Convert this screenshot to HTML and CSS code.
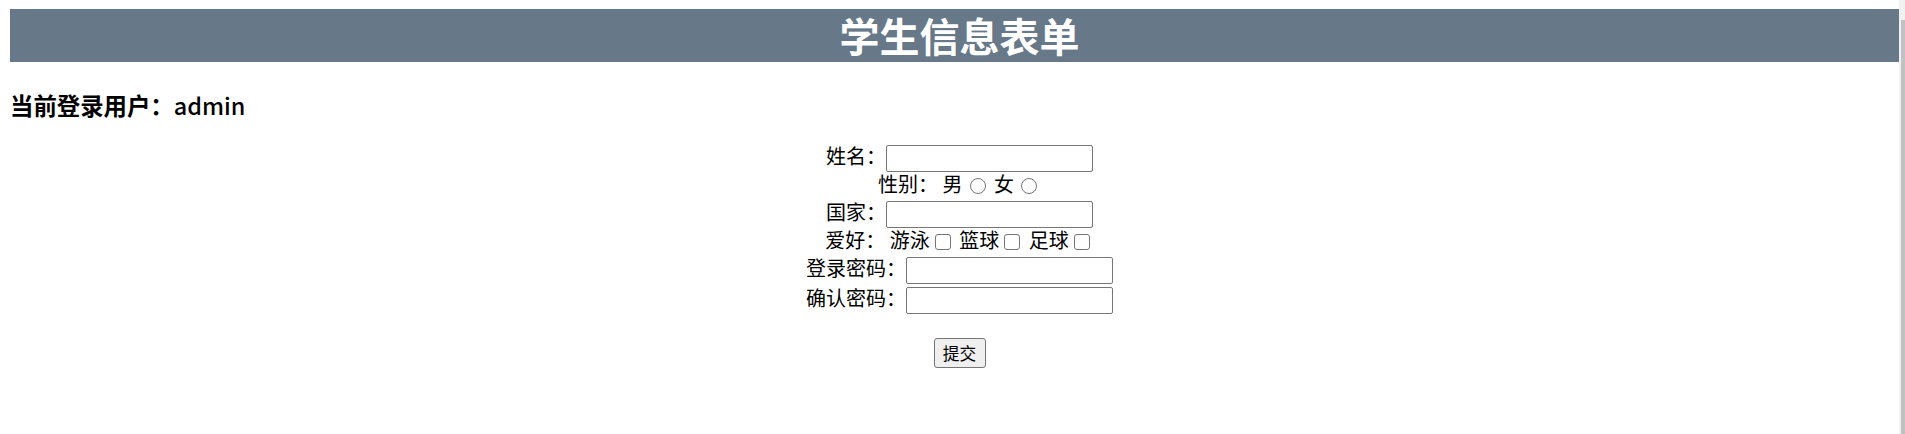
FILE: index.html
```html
<!DOCTYPE html>
<html lang="zh-CN">
<head>
<meta charset="utf-8">
<title>学生信息表单</title>
<link rel="stylesheet" href="styles.css">
</head>
<body>
<div class="page">
  <h1 class="title">学生信息表单</h1>
  <h3 class="user">当前登录用户：<span class="user-name">admin</span></h3>
  <form class="form">
    <div class="row row-input">
      <span class="label">姓名：</span>
      <input class="text" type="text">
    </div>
    <div class="row row-text">
      <span class="label">性别：</span>
      <span class="label sp">男</span>
      <input class="radio" type="radio" name="sex">
      <span class="label sp">女</span>
      <input class="radio" type="radio" name="sex">
    </div>
    <div class="row row-input">
      <span class="label">国家：</span>
      <input class="text" type="text">
    </div>
    <div class="row row-text">
      <span class="label">爱好：</span>
      <span class="label sp">游泳</span>
      <input class="check" type="checkbox">
      <span class="label sp">篮球</span>
      <input class="check" type="checkbox">
      <span class="label sp">足球</span>
      <input class="check" type="checkbox">
    </div>
    <div class="row row-input">
      <span class="label">登录密码：</span>
      <input class="text" type="password">
    </div>
    <div class="row row-input">
      <span class="label">确认密码：</span>
      <input class="text" type="password">
    </div>
    <div class="submit-row">
      <button class="submit" type="button">提交</button>
    </div>
  </form>
</div>
<div class="scrollbar"><div class="thumb"></div></div>
</body>
</html>
```

FILE: styles.css
```css
html {
  overflow: hidden;
}
body {
  margin: 0;
  background: #ffffff;
  color: #000000;
  font-family: "Noto Sans CJK SC", "Noto Sans", sans-serif;
}
.page {
  width: 1899px;
  padding: 9px 0 0 10px;
}
.title {
  margin: 0;
  height: 53px;
  line-height: 53px;
  background: #677888;
  color: #ffffff;
  font-size: 40px;
  font-weight: 700;
  text-align: center;
}
.user {
  margin: 28px 0 0 0;
  height: 30px;
  line-height: 30px;
  font-size: 23.4px;
  font-weight: 700;
}
.user-name {
  font-weight: 500;
}
.form {
  margin: 23px 0 0 0;
}
.row {
  display: flex;
  justify-content: center;
  align-items: center;
  font-size: 20px;
}
.row-input {
  height: 30px;
}
.row-text {
  height: 26px;
}
.label {
  line-height: 20px;
  padding-bottom: 4px;
  white-space: pre;
}
.sp {
  margin-left: 4.5px;
}
.text {
  box-sizing: border-box;
  width: 207px;
  height: 27px;
  margin: 0;
  padding: 1px 3px;
  border: 1px solid #767676;
  border-radius: 2px;
  background: #ffffff;
  font-size: 16px;
}
.radio {
  appearance: none;
  -webkit-appearance: none;
  box-sizing: border-box;
  width: 16px;
  height: 16px;
  margin: 0 4px 0 7px;
  border: 1px solid #767676;
  border-radius: 50%;
  background: #ffffff;
}
.check {
  appearance: none;
  -webkit-appearance: none;
  box-sizing: border-box;
  width: 16px;
  height: 16px;
  margin: 0 4px 0 5px;
  border: 1px solid #767676;
  border-radius: 3px;
  background: #ffffff;
}
.submit-row {
  display: flex;
  justify-content: center;
  margin-top: 23px;
}
.submit {
  box-sizing: border-box;
  width: 52px;
  height: 30px;
  margin: 0;
  padding: 0;
  border: 1px solid #767676;
  border-radius: 3px;
  background: #efefef;
  color: #000000;
  font-family: "Noto Sans CJK SC", sans-serif;
  font-size: 16.7px;
  line-height: 28px;
}
.scrollbar {
  position: fixed;
  top: 0;
  right: 0;
  width: 6px;
  height: 100%;
  background: #f1f1f1;
}
.thumb {
  margin: 20px 0 0 2px;
  height: calc(100% - 20px);
  background: #c1c1c1;
}
```
